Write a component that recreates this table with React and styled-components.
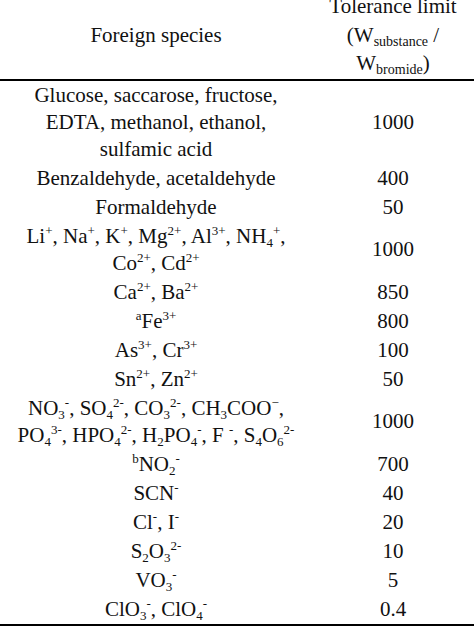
import React from "react";
import styled, { createGlobalStyle } from "styled-components";

const Global = createGlobalStyle`
  html, body {
    margin: 0;
    padding: 0;
    background: #fff;
  }
  body {
    font-family: "Liberation Serif", "Times New Roman", serif;
    color: #111;
    overflow: hidden;
  }
`;

const Table = styled.table`
  width: 474px;
  margin-top: -8px;
  border-collapse: collapse;
  table-layout: fixed;
  font-size: 21px;
  border-bottom: 3px solid #000;
`;

const Head = styled.thead`
  border-bottom: 2px solid #000;
`;

const HeadCell = styled.th`
  font-weight: normal;
  text-align: center;
  vertical-align: middle;
  line-height: 28.5px;
  padding: 0 0 1px;
  width: ${(p) => p.w}px;
`;

const Cell = styled.td`
  text-align: center;
  vertical-align: middle;
  line-height: 27px;
  padding: 1px 0;
  white-space: nowrap;
`;

const Lines = styled.div`
  display: flex;
  flex-direction: column;
  align-items: center;
`;

const Sup = styled.span`
  font-size: ${(p) => p.size || 13}px;
  line-height: 0;
  vertical-align: 0.6em;
`;

const Sub = styled.span`
  font-size: ${(p) => p.size || 13}px;
  line-height: 0;
  vertical-align: -0.3em;
`;

const rows = [
  {
    lines: [
      "Glucose, saccarose, fructose,",
      "EDTA, methanol, ethanol,",
      "sulfamic acid",
    ],
    value: "1000",
  },
  { lines: ["Benzaldehyde, acetaldehyde"], value: "400" },
  { lines: ["Formaldehyde"], value: "50" },
  {
    lines: [
      <>
        Li<Sup>+</Sup>, Na<Sup>+</Sup>, K<Sup>+</Sup>, Mg<Sup>2+</Sup>, Al
        <Sup>3+</Sup>, NH<Sub>4</Sub>
        <Sup>+</Sup>,
      </>,
      <>
        Co<Sup>2+</Sup>, Cd<Sup>2+</Sup>
      </>,
    ],
    value: "1000",
  },
  {
    lines: [
      <>
        Ca<Sup>2+</Sup>, Ba<Sup>2+</Sup>
      </>,
    ],
    value: "850",
  },
  {
    lines: [
      <>
        <Sup>a</Sup>Fe<Sup>3+</Sup>
      </>,
    ],
    value: "800",
  },
  {
    lines: [
      <>
        As<Sup>3+</Sup>, Cr<Sup>3+</Sup>
      </>,
    ],
    value: "100",
  },
  {
    lines: [
      <>
        Sn<Sup>2+</Sup>, Zn<Sup>2+</Sup>
      </>,
    ],
    value: "50",
  },
  {
    lines: [
      <>
        NO<Sub>3</Sub>
        <Sup>-</Sup>, SO<Sub>4</Sub>
        <Sup>2-</Sup>, CO<Sub>3</Sub>
        <Sup>2-</Sup>, CH<Sub>3</Sub>COO<Sup>−</Sup>,
      </>,
      <>
        PO<Sub>4</Sub>
        <Sup>3-</Sup>, HPO<Sub>4</Sub>
        <Sup>2-</Sup>, H<Sub>2</Sub>PO<Sub>4</Sub>
        <Sup>-</Sup>, F <Sup>-</Sup>, S<Sub>4</Sub>O<Sub>6</Sub>
        <Sup>2-</Sup>
      </>,
    ],
    value: "1000",
  },
  {
    lines: [
      <>
        <Sup>b</Sup>NO<Sub>2</Sub>
        <Sup>-</Sup>
      </>,
    ],
    value: "700",
  },
  {
    lines: [
      <>
        SCN<Sup>-</Sup>
      </>,
    ],
    value: "40",
  },
  {
    lines: [
      <>
        Cl<Sup>-</Sup>, I<Sup>-</Sup>
      </>,
    ],
    value: "20",
  },
  {
    lines: [
      <>
        S<Sub>2</Sub>O<Sub>3</Sub>
        <Sup>2-</Sup>
      </>,
    ],
    value: "10",
  },
  {
    lines: [
      <>
        VO<Sub>3</Sub>
        <Sup>-</Sup>
      </>,
    ],
    value: "5",
  },
  {
    lines: [
      <>
        ClO<Sub>3</Sub>
        <Sup>-</Sup>, ClO<Sub>4</Sub>
        <Sup>-</Sup>
      </>,
    ],
    value: "0.4",
  },
];

export default function App() {
  return (
    <>
      <Global />
      <Table>
        <Head>
          <tr>
            <HeadCell w={312}>Foreign species</HeadCell>
            <HeadCell w={162}>
              Tolerance limit
              <br />
              (W<Sub size={14}>substance</Sub> /
              <br />
              W<Sub size={14}>bromide</Sub>)
            </HeadCell>
          </tr>
        </Head>
        <tbody>
          {rows.map((r, i) => (
            <tr key={i}>
              <Cell>
                <Lines>
                  {r.lines.map((l, j) => (
                    <span key={j}>{l}</span>
                  ))}
                </Lines>
              </Cell>
              <Cell>{r.value}</Cell>
            </tr>
          ))}
        </tbody>
      </Table>
    </>
  );
}
